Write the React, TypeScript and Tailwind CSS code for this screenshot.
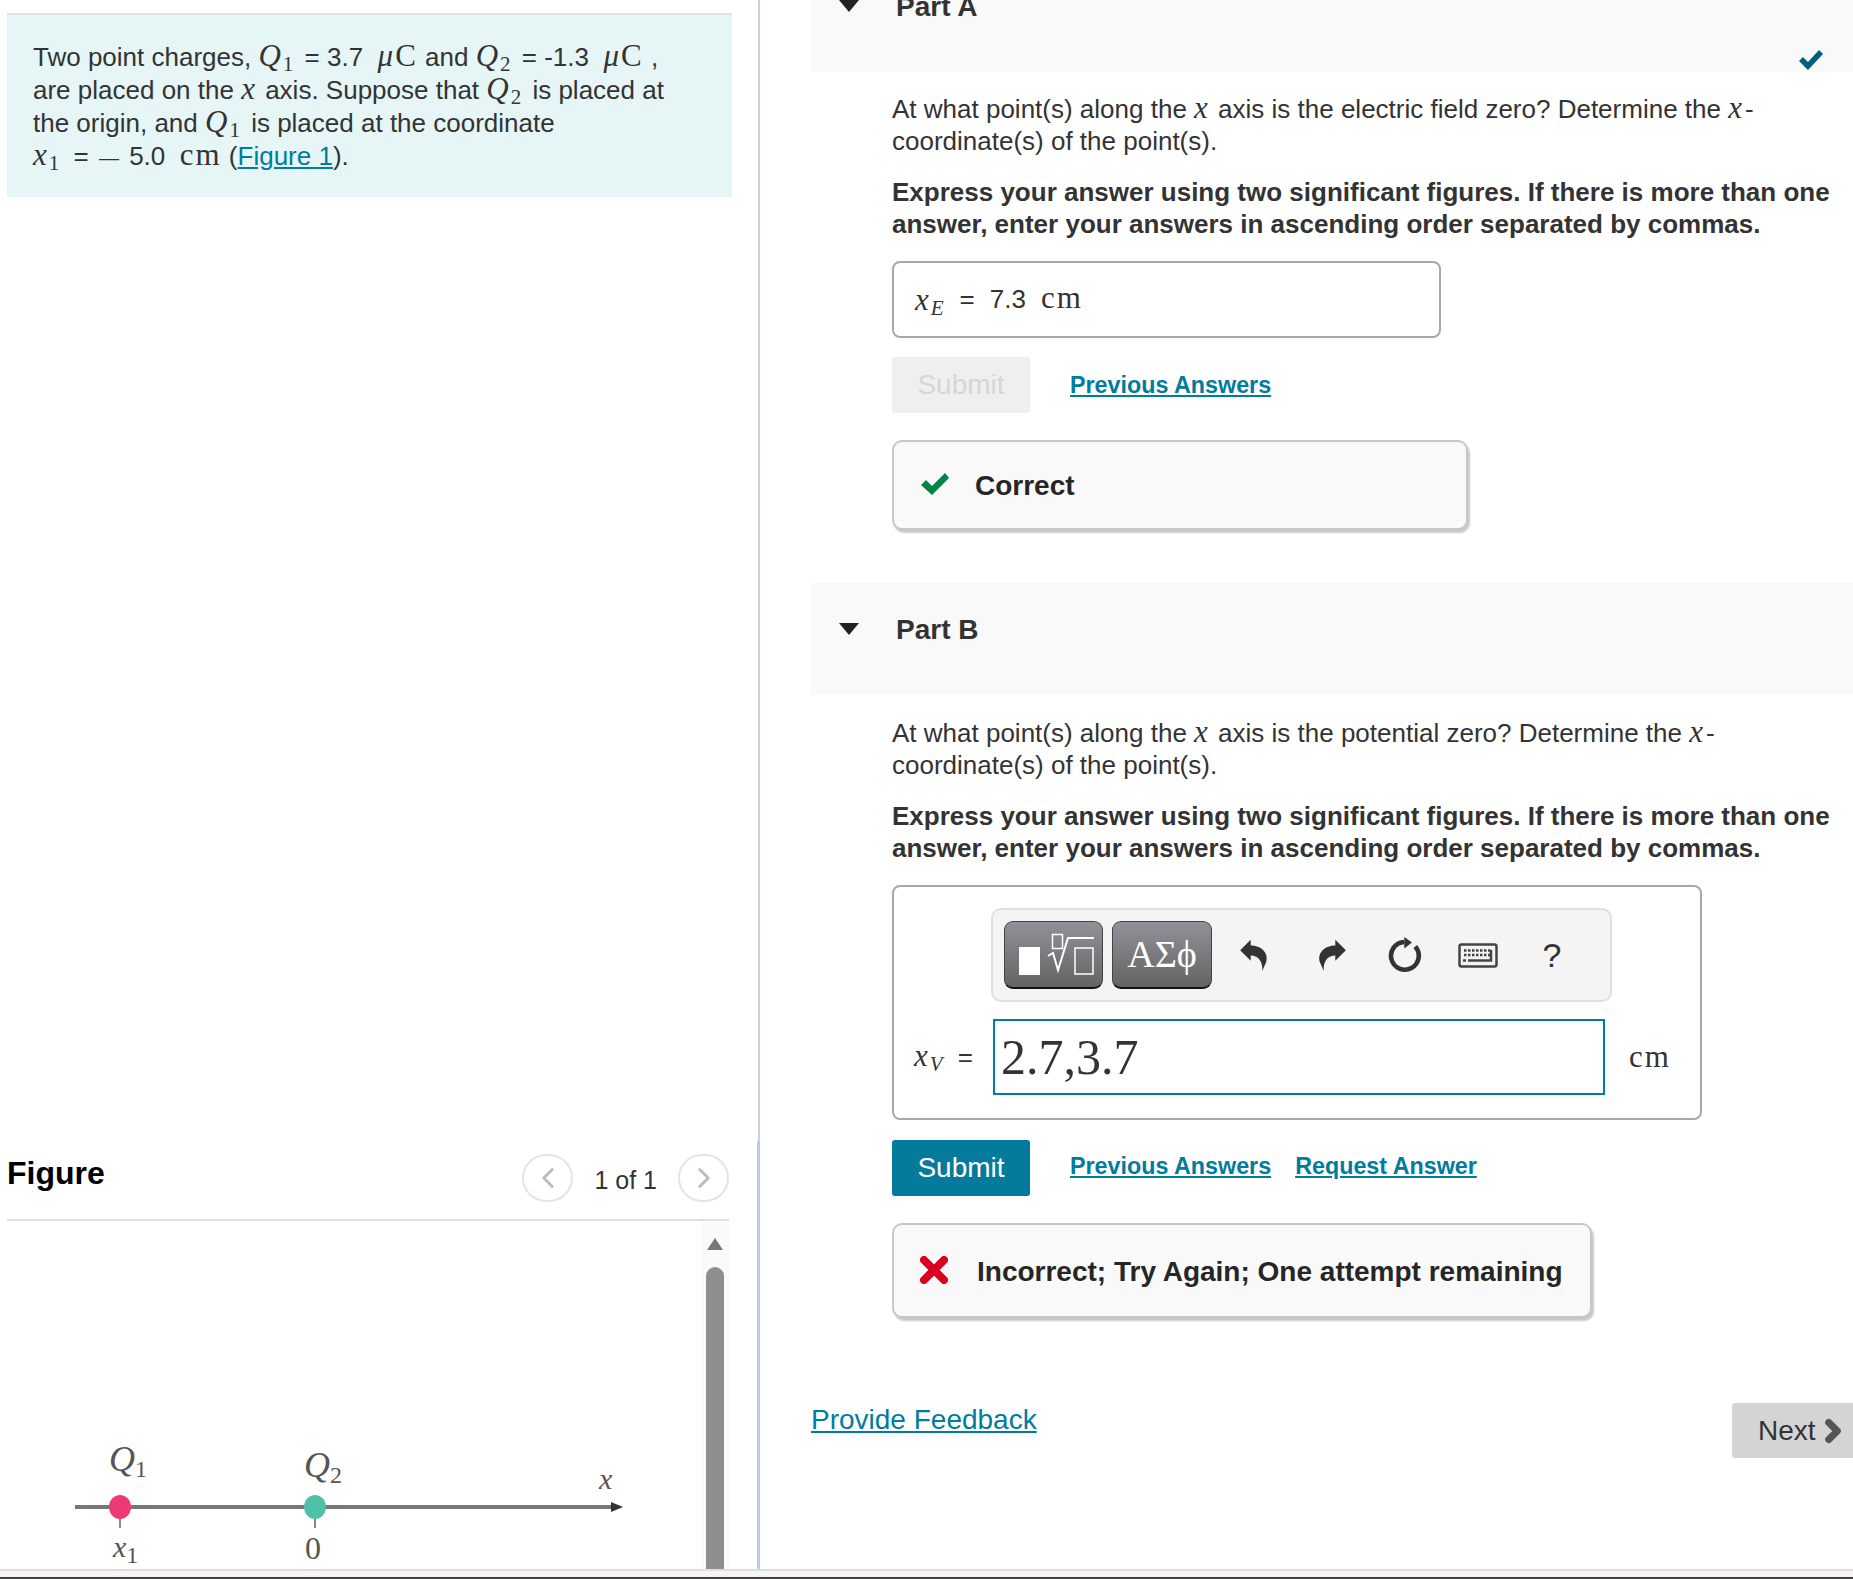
import { ChevronLeft, ChevronRight } from 'lucide-react'

const sans = "font-['Liberation_Sans',Arial,sans-serif]"

function M({ children }: { children: React.ReactNode }) {
  return <span className="font-['Liberation_Serif',serif] italic text-[31px] leading-none tracking-[3px]">{children}</span>
}

function Unit({ children }: { children: React.ReactNode }) {
  return <span className="font-['Liberation_Serif',serif] text-[31px] leading-none tracking-[2px]">{children}</span>
}

function Sub({ children }: { children: React.ReactNode }) {
  return <sub className="ml-[-1px] mr-[4px] font-['Liberation_Serif',serif] not-italic text-[21px] tracking-normal">{children}</sub>
}

function Triangle() {
  return (
    <svg width="22" height="14" viewBox="0 0 22 14" className="shrink-0">
      <path d="M1 1 H21 L11 13 Z" fill="#222" />
    </svg>
  )
}

function PartHeader({ label, check }: { label: string; check?: boolean }) {
  return (
    <div className="relative flex h-[112px] items-start bg-[#f9f9f9] pl-[27px] pt-[32px]">
      <div className="mt-[7px] w-[58px]">
        <Triangle />
      </div>
      <span className="text-[28px] font-bold leading-[30px] text-[#333]">{label}</span>
      {check && (
        <svg width="26" height="22" viewBox="0 0 26 22" className="absolute right-[29px] bottom-[1px]">
          <path d="M1 12 L5 8 L10 13 L21 1 L25 5 L10 21 Z" fill="#005f7d" />
        </svg>
      )}
    </div>
  )
}

function Prompt({ what }: { what: string }) {
  return (
    <div className="pl-[81px] pr-[20px] text-[26px] leading-[32px] text-[#333]">
      <p>
        At what point(s) along the <M>x</M> axis is the {what} zero? Determine the <M>x</M>-
        <br />
        coordinate(s) of the point(s).
      </p>
      <p className="mt-[19px] font-bold">
        Express your answer using two significant figures. If there is more than one answer, enter your answers in
        ascending order separated by commas.
      </p>
    </div>
  )
}

function TextLink({ children }: { children: React.ReactNode }) {
  return (
    <a href="#" className="text-[23.3px] font-bold leading-[30px] text-[#007c9e] underline underline-offset-2">
      {children}
    </a>
  )
}

function Feedback({ children, className }: { children: React.ReactNode; className: string }) {
  return (
    <div
      className={`flex items-center rounded-[10px] border-2 border-[#c7c7c7] bg-[#f9f9f9] pl-[26px] pt-[2px] text-[28px] font-bold text-[#262626] shadow-[2px_3px_2px_#c9c9c9] ${className}`}
    >
      {children}
    </div>
  )
}

function Undo({ className }: { className?: string }) {
  return (
    <svg width="30" height="33" viewBox="30 38 90 100" className={className}>
      <path d="M33 72 L65 40 V58 C95 58 120 78 112 108 L100 135 C102 108 90 88 65 88 V104 Z" fill="#333" />
    </svg>
  )
}

function Refresh() {
  return (
    <svg width="35" height="38" viewBox="470 30 105 115">
      <path d="M555 62 A42 42 0 1 1 522 48" fill="none" stroke="#333" strokeWidth="14" />
      <path d="M522 33 L545 50 L522 68 Z" fill="#333" />
    </svg>
  )
}

function Keyboard() {
  return (
    <svg width="40" height="25" viewBox="0 0 40 25">
      <rect x="1.5" y="1.5" width="37" height="22" rx="2" fill="#f4f4f4" stroke="#444" strokeWidth="2.5" />
      <path d="M6 7.5 H34 M6 12 H32" stroke="#444" strokeWidth="2.5" strokeDasharray="2.5 1.5" />
      <path d="M10 17.5 H30 M33 7 V17.5 H30" fill="none" stroke="#444" strokeWidth="2.5" />
      <path d="M5 17.5 H8" stroke="#444" strokeWidth="2.5" />
    </svg>
  )
}

function Toolbar() {
  const btn =
    'flex h-[68px] w-[99px] items-center justify-center rounded-[9px] border border-b-2 border-[#444] border-b-[#111] bg-gradient-to-b from-[#92919a] to-[#646464]'
  return (
    <div className="ml-[97px] flex h-[94px] w-[621px] items-center rounded-[10px] border-2 border-[#e0e0e0] bg-[#f4f4f4] pl-[11px]">
      <div className={btn}>
        <svg width="97" height="65" viewBox="1 1 97 65">
          <rect x="15" y="26" width="21" height="28" fill="#fff" />
          <rect x="48.5" y="13.5" width="10" height="14" fill="none" stroke="#fff" strokeWidth="1.5" />
          <path d="M44 35 L49 32 L54 49 L64 17 H90" fill="none" stroke="#fff" strokeWidth="2" />
          <rect x="71" y="27" width="18" height="26" fill="none" stroke="#fff" strokeWidth="1.5" />
        </svg>
      </div>
      <div className={`${btn} ml-[9px] w-[100px] font-['Liberation_Serif',serif] text-[38px] text-white`}>ΑΣϕ</div>
      <div className="ml-[21px] flex items-center text-[#333]">
        <div className="flex w-[42px] justify-center">
          <Undo />
        </div>
        <div className="ml-[36px] flex w-[42px] justify-center">
          <Undo className="-scale-x-100" />
        </div>
        <div className="ml-[30px] flex w-[42px] justify-center">
          <Refresh />
        </div>
        <div className="ml-[32px] flex w-[42px] justify-center">
          <Keyboard />
        </div>
        <div className="ml-[32px] w-[42px] text-center text-[34px] leading-none">?</div>
      </div>
    </div>
  )
}

function Figure() {
  const label = { fontFamily: 'Liberation Serif', fontStyle: 'italic', fill: '#555' }
  return (
    <svg width="690" height="348" viewBox="0 0 690 348" className="shrink-0">
      <path d="M68 286 H606" stroke="#777" strokeWidth="4" />
      <path d="M604 281 L616 286 L604 291 Z" fill="#333" />
      <path d="M113 296 V307 M308 296 V307" stroke="#888" strokeWidth="2" />
      <ellipse cx="113" cy="286" rx="11" ry="12" fill="#ee3a72" />
      <ellipse cx="308" cy="286" rx="11" ry="12" fill="#4fc1aa" />
      <text x="102" y="250" fontSize="36" style={label}>
        Q<tspan fontSize="24" dy="6" fontStyle="normal">1</tspan>
      </text>
      <text x="297" y="256" fontSize="36" style={label}>
        Q<tspan fontSize="24" dy="6" fontStyle="normal">2</tspan>
      </text>
      <text x="592" y="268" fontSize="30" style={label}>x</text>
      <text x="106" y="336" fontSize="30" style={label}>
        x<tspan fontSize="24" dy="6" fontStyle="normal">1</tspan>
      </text>
      <text x="298" y="338" fontSize="32" style={{ ...label, fontStyle: 'normal' }}>0</text>
    </svg>
  )
}

export default function App() {
  return (
    <div className={`flex h-[1579px] w-[1853px] flex-col overflow-hidden bg-white ${sans}`}>
      <div className="flex h-[1569px] overflow-hidden">
        <aside className="flex w-[760px] shrink-0 flex-col">
          <div className="h-[1141px] border-r-2 border-[#c4d2e4] pt-[13px] pl-[7px] pr-[26px]">
            <div className="h-[184px] border-t-2 border-[#e0e0e0] bg-[#e6f6f7] pl-[26px] pt-[25px] text-[26px] leading-[31px] text-[#333]">
              Two point charges, <M>Q<Sub>1</Sub></M> = 3.7 &nbsp;<Unit><i>μ</i>C</Unit> and <M>Q<Sub>2</Sub></M> = -1.3 &nbsp;<Unit><i>μ</i>C</Unit> ,
              <br />
              are placed on the <M>x</M> axis. Suppose that <M>Q<Sub>2</Sub></M> is placed at
              <br />
              the origin, and <M>Q<Sub>1</Sub></M> is placed at the coordinate
              <br />
              <M>x<Sub>1</Sub></M> <span className="ml-[3px]">=</span> <span className="mx-[3px] text-[20px]">—</span> 5.0 &nbsp;<Unit>cm</Unit> (
              <a href="#" className="text-[#007c9e] underline underline-offset-2">Figure 1</a>).
            </div>
          </div>
          <div className="flex min-h-0 flex-1 flex-col border-r-[3px] border-[#b9cce4] pl-[7px] pr-[28px]">
            <div className="flex h-[80px] items-start border-b-2 border-[#e0e0e0]">
              <h2 className="mt-[13px] flex-1 text-[32px] font-bold leading-[38px] text-black">Figure</h2>
              <div className="mt-[13px] flex items-center text-[25px] text-[#333]">
                <div className="flex h-[48px] w-[51px] items-center justify-center rounded-full border-2 border-[#e4e4e4] text-[#bbb]">
                  <ChevronLeft size={34} strokeWidth={2} />
                </div>
                <span className="mx-[21px] mt-[6px]">1 of 1</span>
                <div className="flex h-[48px] w-[51px] items-center justify-center rounded-full border-2 border-[#e4e4e4] text-[#bbb]">
                  <ChevronRight size={34} strokeWidth={2} />
                </div>
              </div>
            </div>
            <div className="flex min-h-0 flex-1 justify-between">
              <Figure />
              <div className="flex w-[28px] flex-col items-center bg-[#fafafa] pt-[16px]">
                <svg width="18" height="14" viewBox="0 0 18 14">
                  <path d="M9 1 L17 13 H1 Z" fill="#777" />
                </svg>
                <div className="mt-[16px] w-[18px] flex-1 rounded-t-full bg-[#8e8e8e]" />
              </div>
            </div>
          </div>
        </aside>

        <main className="-mt-[40px] min-w-0 flex-1 pl-[51px] text-[#333]">
          <PartHeader label="Part A" check />
          <div className="pt-[20px]">
            <Prompt what="electric field" />
          </div>
          <div className="ml-[81px] mt-[21px] flex h-[77px] w-[549px] items-center rounded-[8px] border-2 border-[#a8a8a8] pl-[21px] text-[26px]">
            <M>x<Sub><i>E</i></Sub></M>
            <span className="ml-[12px]">=</span>
            <span className="ml-[15px]">7.3</span>
            <span className="ml-[15px]">
              <Unit>cm</Unit>
            </span>
          </div>
          <div className="ml-[81px] mt-[19px] flex items-center">
            <div className="flex h-[56px] w-[138px] items-center justify-center rounded-[3px] bg-[#efefef] text-[28px] text-[#d6d6d6]">
              Submit
            </div>
            <div className="ml-[40px]">
              <TextLink>Previous Answers</TextLink>
            </div>
          </div>
          <Feedback className="ml-[81px] mt-[27px] h-[90px] w-[576px]">
            <svg width="30" height="24" viewBox="0 0 30 24" className="mt-[-4px]">
              <path d="M1 13 L6 8 L12 14 L25 1 L29 6 L12 23 Z" fill="#008542" />
            </svg>
            <span className="ml-[25px]">Correct</span>
          </Feedback>

          <div className="mt-[53px]">
            <PartHeader label="Part B" />
          </div>
          <div className="pt-[21px]">
            <Prompt what="potential" />
          </div>
          <div className="ml-[81px] mt-[21px] h-[235px] w-[810px] rounded-[8px] border-2 border-[#a8a8a8] pt-[21px]">
            <Toolbar />
            <div className="mt-[17px] flex items-center">
              <div className="ml-[20px] w-[79px] whitespace-nowrap text-[26px]">
                <M>x<Sub><i>V</i></Sub></M> <span className="ml-[4px]">=</span>
              </div>
              <div className="flex h-[76px] w-[612px] items-center border-2 border-[#007c9e] pl-[6px] font-['Liberation_Serif',serif] text-[50px]">
                2.7,3.7
              </div>
              <div className="ml-[24px]">
                <Unit>cm</Unit>
              </div>
            </div>
          </div>
          <div className="ml-[81px] mt-[20px] flex items-start">
            <div className="flex h-[56px] w-[138px] items-center justify-center rounded-[3px] bg-[#047a9c] text-[28px] text-white">
              Submit
            </div>
            <div className="ml-[40px] mt-[11px] flex gap-[24px]">
              <TextLink>Previous Answers</TextLink>
              <TextLink>Request Answer</TextLink>
            </div>
          </div>
          <Feedback className="ml-[81px] mt-[27px] h-[95px] w-[700px]">
            <svg width="28" height="28" viewBox="0 0 28 28" className="mt-[-4px]">
              <path d="M4 4 L24 24 M24 4 L4 24" stroke="#db0020" strokeWidth="8" strokeLinecap="round" />
            </svg>
            <span className="ml-[29px]">Incorrect; Try Again; One attempt remaining</span>
          </Feedback>
          <div className="mt-[85px] flex items-start justify-between">
            <a href="#" className="mt-[1px] text-[28px] leading-[32px] text-[#007c9e] underline underline-offset-2">
              Provide Feedback
            </a>
            <div className="flex h-[55px] w-[121px] items-center rounded-l-[3px] bg-[#d4d4d4] pl-[26px] text-[28px]">
              Next
              <ChevronRight size={34} strokeWidth={5} className="text-[#555]" />
            </div>
          </div>
        </main>
      </div>
      <div className="flex-1 border-t-2 border-[#dedede] bg-[#f4f4f4]">
        <div className="mt-[6px] h-[2px] bg-[#4a3f3f]" />
      </div>
    </div>
  )
}
